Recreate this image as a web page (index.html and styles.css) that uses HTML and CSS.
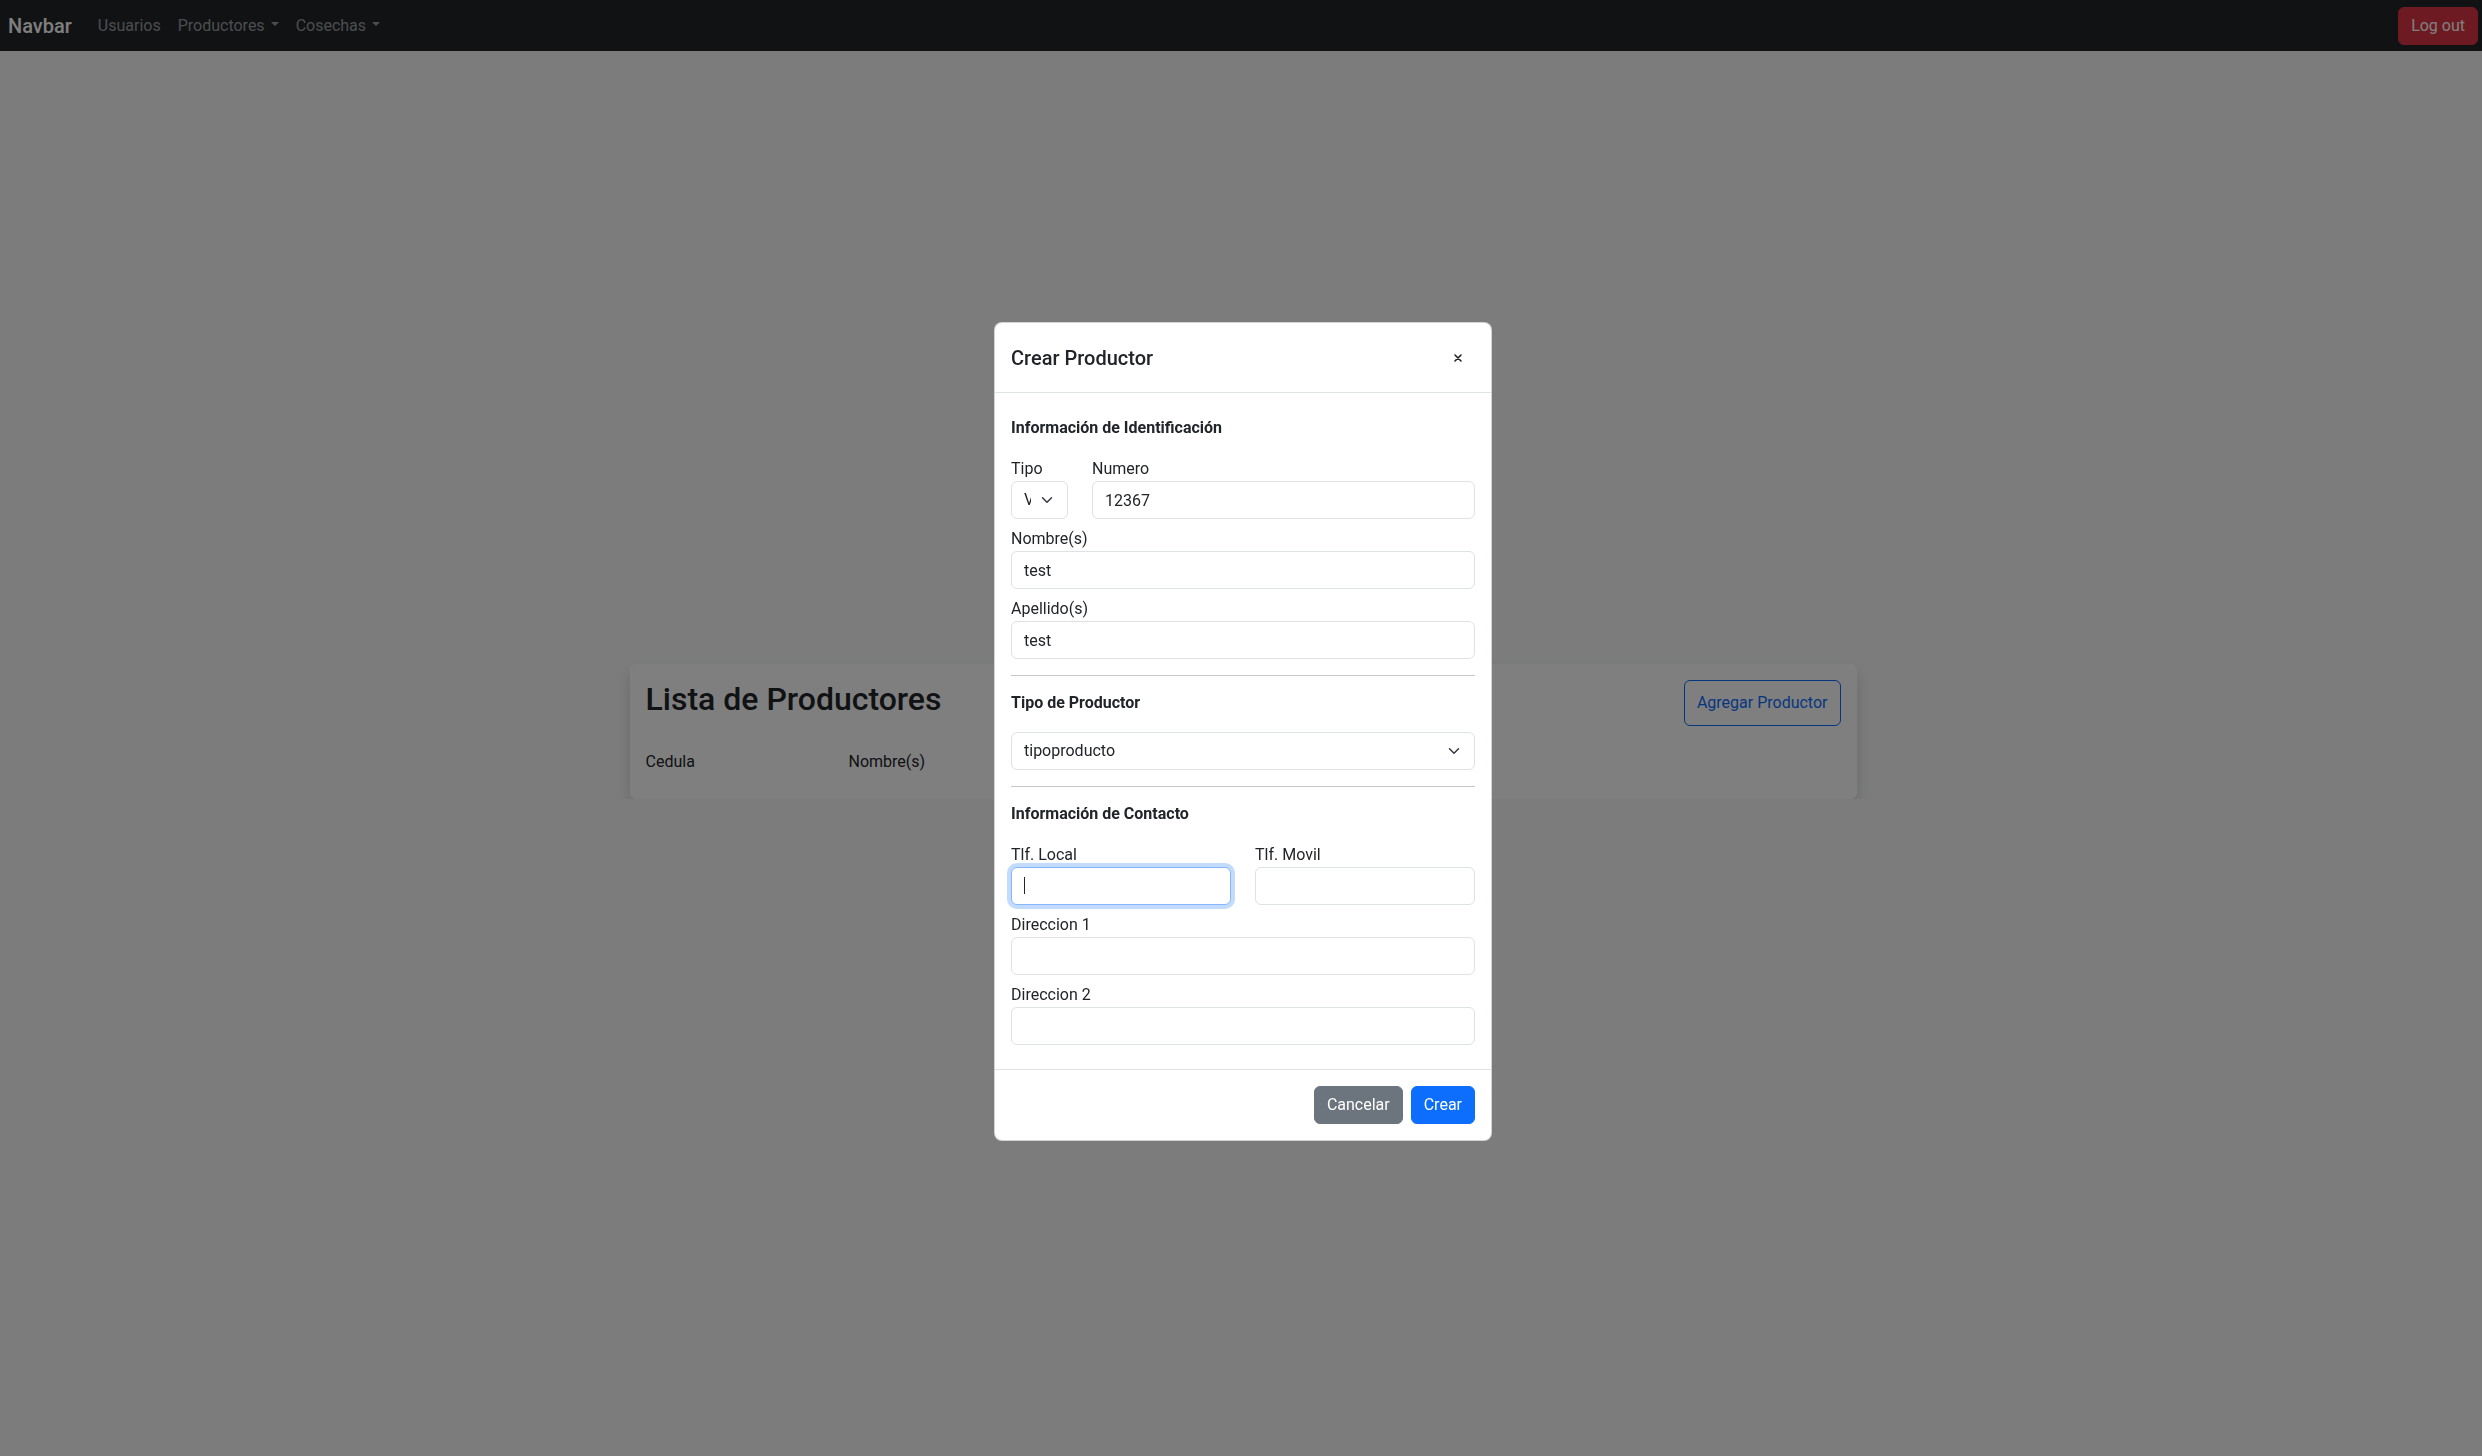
FILE: index.html
```html
<!DOCTYPE html>
<html lang="es">
<head>
  <meta charset="UTF-8">
  <meta name="viewport" content="width=device-width, initial-scale=1.0">
  <title>Productores</title>
  <link rel="stylesheet" href="styles.css">
</head>
<body>

  <!-- Navbar -->
  <nav class="navbar">
    <a class="navbar-brand" href="#">Navbar</a>
    <ul class="nav-links">
      <li><a class="nav-link" href="#">Usuarios</a></li>
      <li><a class="nav-link dropdown-toggle" href="#">Productores</a></li>
      <li><a class="nav-link dropdown-toggle" href="#">Cosechas</a></li>
    </ul>
    <button class="btn btn-danger logout">Log out</button>
  </nav>

  <!-- Page content -->
  <main class="page">
    <div class="card">
      <div class="card-head">
        <h2>Lista de Productores</h2>
        <button class="btn btn-outline-primary">Agregar Productor</button>
      </div>
      <div class="table-head">
        <span>Cedula</span>
        <span>Nombre(s)</span>
        <span>Apellido(s)</span>
        <span>Tipo</span>
      </div>
    </div>
  </main>

  <!-- Modal -->
  <div class="modal-backdrop"></div>
  <div class="modal">
    <div class="modal-dialog">
      <div class="modal-header">
        <h5 class="modal-title">Crear Productor</h5>
        <button class="btn-close" aria-label="Close">
          <svg width="8" height="8" viewBox="0 0 8 8"><path d="M1 1 7 7M7 1 1 7" stroke="#212529" stroke-width="1.6" stroke-linecap="round"/></svg>
        </button>
      </div>

      <form class="modal-body">
        <h6 class="section-title">Información de Identificación</h6>
        <div class="row">
          <div class="group col-tipo">
            <label>Tipo</label>
            <div class="select-wrap">
              <select class="form-select"><option>V</option><option>E</option></select>
              <svg class="chevron" width="16" height="12" viewBox="0 0 16 16"><path d="m2 5 6 6 6-6" fill="none" stroke="#343a40" stroke-width="2" stroke-linecap="round" stroke-linejoin="round"/></svg>
            </div>
          </div>
          <div class="group col-fill">
            <label>Numero</label>
            <input class="form-control" type="text" value="12367">
          </div>
        </div>
        <div class="group">
          <label>Nombre(s)</label>
          <input class="form-control" type="text" value="test">
        </div>
        <div class="group">
          <label>Apellido(s)</label>
          <input class="form-control" type="text" value="test">
        </div>

        <hr>

        <h6 class="section-title">Tipo de Productor</h6>
        <div class="group">
          <div class="select-wrap">
            <select class="form-select"><option>tipoproducto</option></select>
            <svg class="chevron" width="16" height="12" viewBox="0 0 16 16"><path d="m2 5 6 6 6-6" fill="none" stroke="#343a40" stroke-width="2" stroke-linecap="round" stroke-linejoin="round"/></svg>
          </div>
        </div>

        <hr>

        <h6 class="section-title">Información de Contacto</h6>
        <div class="row-half">
          <div class="group">
            <label>Tlf. Local</label>
            <div class="caret-wrap">
              <input class="form-control is-focused" type="text">
            </div>
          </div>
          <div class="group">
            <label>Tlf. Movil</label>
            <input class="form-control" type="text">
          </div>
        </div>
        <div class="group">
          <label>Direccion 1</label>
          <input class="form-control" type="text">
        </div>
        <div class="group">
          <label>Direccion 2</label>
          <input class="form-control" type="text">
        </div>
      </form>

      <div class="modal-footer">
        <button class="btn btn-secondary">Cancelar</button>
        <button class="btn btn-primary">Crear</button>
      </div>
    </div>
  </div>

</body>
</html>
```

FILE: styles.css
```css
/* Global Styles */
* {
  box-sizing: border-box;
}
body {
  font-family: Roboto, 'Liberation Sans', sans-serif;
  font-size: 16px;
  line-height: 1.5;
  margin: 0;
  padding: 0;
  background-color: #f8f9fa;
  color: #212529;
  overflow: hidden;
}
button,
input,
select {
  font-family: inherit;
  font-size: 16px;
}

/* Navbar */
.navbar {
  display: flex;
  align-items: center;
  height: 51px;
  padding: 0 4px 0 8px;
  background-color: #212529;
}
.navbar-brand {
  font-size: 20px;
  font-weight: 500;
  color: #fff;
  text-decoration: none;
  margin-right: 18px;
}
.nav-links {
  display: flex;
  list-style: none;
  margin: 0;
  padding: 0;
}
.nav-link {
  display: block;
  padding: 8px;
  color: rgba(255, 255, 255, 0.55);
  text-decoration: none;
}
.nav-links li + li {
  margin-left: 1px;
}
.dropdown-toggle::after {
  content: "";
  display: inline-block;
  margin-left: 6px;
  vertical-align: 0.255em;
  border-top: 0.3em solid;
  border-right: 0.3em solid transparent;
  border-left: 0.3em solid transparent;
}
.logout {
  margin-left: auto;
}

/* Buttons */
.btn {
  display: inline-flex;
  align-items: center;
  justify-content: center;
  height: 38px;
  padding: 0 12px;
  border: 1px solid transparent;
  border-radius: 6px;
  line-height: 24px;
  cursor: pointer;
}
.btn-danger {
  background-color: #dc3545;
  border-color: #dc3545;
  color: #fff;
}
.btn-primary {
  background-color: #0d6efd;
  border-color: #0d6efd;
  color: #fff;
}
.btn-secondary {
  background-color: #6c757d;
  border-color: #6c757d;
  color: #fff;
}
.btn-outline-primary {
  background: transparent;
  border-color: #0d6efd;
  color: #0d6efd;
  height: auto;
}

/* Page */
.page {
  padding: 613px 0 0 4px;
}
.card {
  width: 1227px;
  margin: 0 auto;
  padding: 16px 16px 9px;
  background: #fff;
  border-radius: 6px;
  box-shadow: 0 8px 16px rgba(0, 0, 0, 0.15);
}
.card-head {
  display: flex;
  justify-content: space-between;
}
.card-head h2 {
  margin: 0 0 8px;
  font-size: 32px;
  font-weight: 500;
  line-height: 1.2;
}
.table-head {
  display: grid;
  grid-template-columns: repeat(4, 203px);
  margin-top: 24px;
  padding-bottom: 16px;
}

/* Modal */
.modal-backdrop {
  position: fixed;
  inset: 0;
  background-color: rgba(0, 0, 0, 0.5);
}
.modal {
  position: fixed;
  inset: 0;
  padding-left: 4px;
}
.modal-dialog {
  width: 498px;
  margin: 322px auto 0;
  background: #fff;
  border: 1px solid rgba(0, 0, 0, 0.175);
  border-radius: 8px;
}
.modal-header {
  display: flex;
  align-items: center;
  justify-content: space-between;
  height: 70px;
  padding: 0 16px;
  border-bottom: 1px solid #dee2e6;
}
.modal-title {
  margin: 0;
  font-size: 20px;
  font-weight: 500;
  line-height: 30px;
}
.btn-close {
  display: flex;
  align-items: center;
  justify-content: center;
  width: 35px;
  height: 37px;
  padding: 0;
  border: 0;
  background: transparent;
}
.modal-body {
  display: block;
  padding: 23px 16px 16px;
}
.section-title {
  margin: 0 0 17px;
  font-size: 16px;
  font-weight: 700;
  line-height: 24px;
}
.row {
  display: flex;
  gap: 24px;
}
.col-tipo {
  width: 57px;
}
.col-fill {
  flex: 1;
}
.row-half {
  display: grid;
  grid-template-columns: 1fr 1fr;
  gap: 24px;
}
.group {
  margin-bottom: 8px;
}
.group label {
  display: block;
  line-height: 24px;
}
.form-control,
.form-select {
  display: block;
  width: 100%;
  height: 38px;
  padding: 6px 12px;
  border: 1px solid #dee2e6;
  border-radius: 6px;
  background: #fff;
  color: #212529;
  line-height: 24px;
  outline: none;
}
.form-select {
  appearance: none;
  padding-right: 36px;
  overflow: hidden;
}
.select-wrap,
.caret-wrap {
  position: relative;
}
.chevron {
  position: absolute;
  right: 13px;
  top: 13px;
  pointer-events: none;
}
.is-focused {
  border-color: #86b7fe;
  box-shadow: 0 0 0 4px rgba(13, 110, 253, 0.25);
}
.caret-wrap::after {
  content: "";
  position: absolute;
  left: 13px;
  top: 10px;
  width: 1px;
  height: 17px;
  background: #212529;
}
/* group margin collapses into this one */
hr {
  margin: 16px 0 15px;
  border: 0;
  border-top: 1px solid #212529;
  opacity: 0.25;
}
.modal-footer {
  display: flex;
  justify-content: flex-end;
  gap: 8px;
  padding: 16px;
  border-top: 1px solid #dee2e6;
}
```
